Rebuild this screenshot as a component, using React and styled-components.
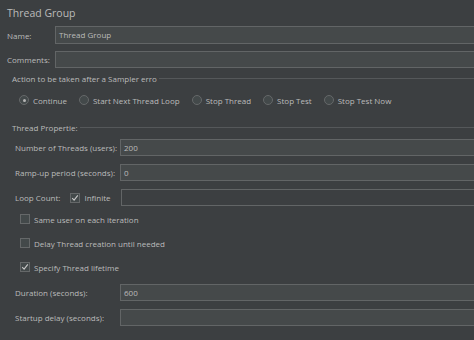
import styled, { createGlobalStyle } from "styled-components";

const GlobalStyle = createGlobalStyle`
  html, body {
    margin: 0;
    padding: 0;
    background: #3c3f41;
    overflow: hidden;
  }
  body {
    font-family: "Open Sans", "Liberation Sans", sans-serif;
    color: #bbbbbb;
  }
`;

const Page = styled.div`
  width: 474px;
  height: 340px;
  padding: 3px 0 0 7px;
  box-sizing: border-box;
  display: flex;
  flex-direction: column;
  overflow: hidden;
`;

const Title = styled.div`
  font-size: 10.5px;
  height: 20px;
  line-height: 20px;
  margin-bottom: 3px;
`;

const FieldRow = styled.div`
  display: grid;
  grid-template-columns: ${(p) => p.$label}px 1fr;
  align-items: center;
  margin-bottom: ${(p) => p.$gap || 0}px;
  padding-left: ${(p) => p.$indent || 0}px;
`;

const Label = styled.span`
  font-size: 8px;
  white-space: nowrap;
`;

const Input = styled.div`
  height: ${(p) => p.$h || 17}px;
  box-sizing: border-box;
  border: 1px solid #626566;
  border-right: none;
  background: ${(p) => (p.$disabled ? "#3c3f41" : "#45494a")};
  font-size: 8px;
  line-height: ${(p) => (p.$h || 17) - 2}px;
  padding-left: 3px;
  color: #bbbbbb;
`;

const Legend = styled.div`
  display: flex;
  align-items: center;
  gap: 2px;
  height: 14px;
  padding-left: 5px;
  margin-bottom: ${(p) => p.$gap}px;
  font-size: 8px;

  &::after {
    content: "";
    flex: 1;
    border-top: 1px solid #55585a;
  }
`;

const RadioRow = styled.div`
  display: flex;
  align-items: center;
  height: 14px;
  padding-left: 12px;
  gap: 12px;
  margin-bottom: 13px;
`;

const Option = styled.label`
  display: flex;
  align-items: center;
  gap: 4px;
  font-size: 8px;
  white-space: nowrap;
`;

const Radio = styled.span`
  width: 10px;
  height: 10px;
  box-sizing: border-box;
  border-radius: 50%;
  border: 1px solid #656869;
  background: #43494a;
  display: flex;
  align-items: center;
  justify-content: center;

  &::after {
    content: "";
    width: 3px;
    height: 3px;
    border-radius: 50%;
    background: ${(p) => (p.$on ? "#b5b5b5" : "transparent")};
  }
`;

const Box = styled.span`
  width: 10px;
  height: 10px;
  box-sizing: border-box;
  border: 1px solid #656869;
  background: #43494a;
  display: flex;
  align-items: center;
  justify-content: center;
  flex-shrink: 0;
`;

const CheckRow = styled.div`
  display: flex;
  align-items: center;
  height: 14px;
  padding-left: 13px;
  margin-bottom: 10px;
`;

const CheckItem = styled.div`
  display: flex;
  align-items: center;
  gap: 4px;
`;

const LoopLabel = styled.div`
  display: flex;
  align-items: center;
  gap: 10px;
`;

const Check = ({ on }) => (
  <Box>
    {on && (
      <svg width="8" height="8" viewBox="0 0 8 8">
        <path d="M1.2 4.2 L3.1 6.2 L6.8 1.3" fill="none" stroke="#c8c8c8" strokeWidth="1.1" />
      </svg>
    )}
  </Box>
);

const App = () => {
  return (
    <Page>
      <GlobalStyle />
      <Title>Thread Group</Title>
      <FieldRow $label={48} $gap={7}>
        <Label>Name:</Label>
        <Input $h={18}>Thread Group</Input>
      </FieldRow>
      <FieldRow $label={48} $gap={3}>
        <Label>Comments:</Label>
        <Input>&nbsp;</Input>
      </FieldRow>
      <Legend $gap={8}>Action to be taken after a Sampler erro</Legend>
      <RadioRow>
        <Option><Radio $on />Continue</Option>
        <Option><Radio />Start Next Thread Loop</Option>
        <Option><Radio />Stop Thread</Option>
        <Option><Radio />Stop Test</Option>
        <Option><Radio />Stop Test Now</Option>
      </RadioRow>
      <Legend $gap={5}>Thread Propertie:</Legend>
      <FieldRow $label={105} $indent={8} $gap={8}>
        <Label>Number of Threads (users):</Label>
        <Input>200</Input>
      </FieldRow>
      <FieldRow $label={105} $indent={8} $gap={8}>
        <Label>Ramp-up period (seconds):</Label>
        <Input>0</Input>
      </FieldRow>
      <FieldRow $label={106} $indent={8} $gap={6}>
        <LoopLabel>
          <Label>Loop Count:</Label>
          <CheckItem>
            <Check on />
            <Label>Infinite</Label>
          </CheckItem>
        </LoopLabel>
        <Input $disabled>&nbsp;</Input>
      </FieldRow>
      <CheckRow>
        <CheckItem><Check /><Label>Same user on each iteration</Label></CheckItem>
      </CheckRow>
      <CheckRow>
        <CheckItem><Check /><Label>Delay Thread creation until needed</Label></CheckItem>
      </CheckRow>
      <CheckRow>
        <CheckItem><Check on /><Label>Specify Thread lifetime</Label></CheckItem>
      </CheckRow>
      <FieldRow $label={105} $indent={8} $gap={8}>
        <Label>Duration (seconds):</Label>
        <Input>600</Input>
      </FieldRow>
      <FieldRow $label={105} $indent={8}>
        <Label>Startup delay (seconds):</Label>
        <Input>&nbsp;</Input>
      </FieldRow>
    </Page>
  );
};

export default App;
